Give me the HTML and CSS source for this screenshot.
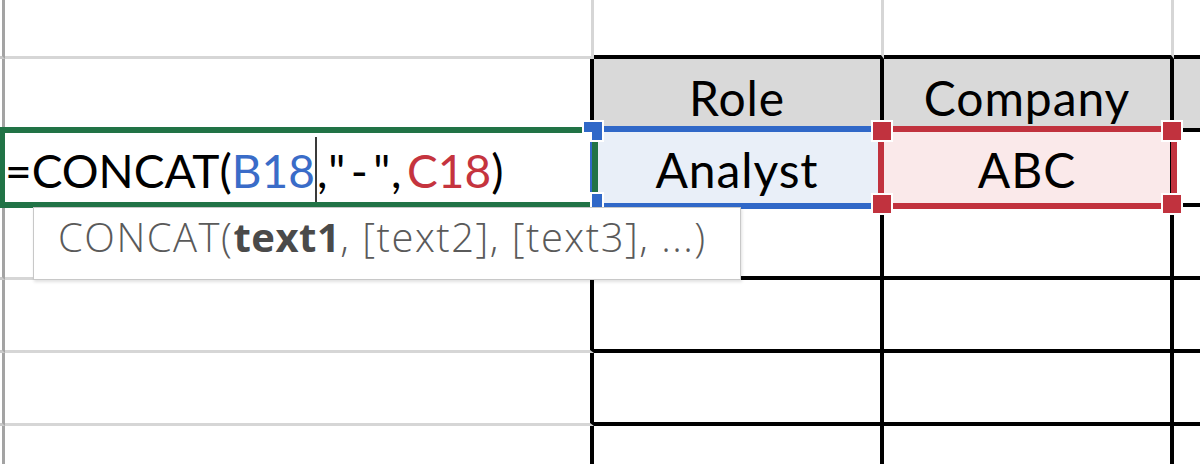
FILE: index.html
```html
<!DOCTYPE html>
<html lang="en">
<head>
<meta charset="utf-8">
<title>CONCAT formula</title>
<link rel="stylesheet" href="styles.css">
</head>
<body>
<div class="sheet">
  <div class="grid">
    <!-- row 1 -->
    <div class="rh"></div>
    <div class="c"></div>
    <div class="c top"></div>
    <div class="c top"></div>
    <div class="c top"></div>
    <!-- row 2 (table header) -->
    <div class="rh"></div>
    <div class="c ta"></div>
    <div class="t head">Role</div>
    <div class="t head">Company</div>
    <div class="t head"></div>
    <!-- row 3 (editing row) -->
    <div class="rh"></div>
    <div class="c ta edit"><span class="formula">=CONCAT(<span class="ref-b">B18</span><span class="caret"></span><span class="punct">,"-",</span><span class="ref-c">C18</span>)</span></div>
    <div class="t val fill-b">Analyst</div>
    <div class="t val fill-c">ABC</div>
    <div class="t"></div>
    <!-- row 4 -->
    <div class="rh"></div>
    <div class="c ta"></div>
    <div class="t"></div>
    <div class="t"></div>
    <div class="t"></div>
    <!-- row 5 -->
    <div class="rh"></div>
    <div class="c ta"></div>
    <div class="t"></div>
    <div class="t"></div>
    <div class="t"></div>
    <!-- row 6 -->
    <div class="rh"></div>
    <div class="c ta"></div>
    <div class="t"></div>
    <div class="t"></div>
    <div class="t"></div>
    <!-- row 7 -->
    <div class="rh"></div>
    <div class="c ta"></div>
    <div class="t"></div>
    <div class="t"></div>
    <div class="t"></div>
  </div>

  <div class="box box-blue"></div>
  <div class="box box-red"></div>
  <div class="box box-green"></div>

  <svg class="handle h-blue-top" width="22" height="22" viewBox="0 0 22 22">
    <path d="M2 2 H20 V20 H10 V12 H2 Z" fill="#3068c8" stroke="#ffffff" stroke-width="4" paint-order="stroke"/>
  </svg>
  <div class="handle h-blue-bottom"></div>
  <div class="handle h-red h-r1"></div>
  <div class="handle h-red h-r2"></div>
  <div class="handle h-red h-r3"></div>
  <div class="handle h-red h-r4"></div>

  <div class="tooltip">CONCAT(<b>text1</b>, [text2], [text3], ...)</div>
</div>
</body>
</html>
```

FILE: styles.css
```css
html, body {
  margin: 0;
  padding: 0;
  background: #ffffff;
}

body {
  width: 1200px;
  height: 464px;
  overflow: hidden;
  font-family: Lato, "Open Sans", sans-serif;
}

.sheet {
  position: relative;
  width: 1200px;
  height: 464px;
  overflow: hidden;
}

.grid {
  display: grid;
  grid-template-columns: 5px 589px 290px 290px 40px;
  grid-template-rows: 59px 73px 75px 73px 73px 73px 60px;
}

.grid > div {
  box-sizing: border-box;
}

.rh {
  border-right: 3px solid #a3a3a3;
  border-bottom: 3px solid #c9c9c9;
}

.c {
  border-right: 3px solid #d6d6d6;
  border-bottom: 3px solid #d6d6d6;
}

.c.top {
  border-bottom: 4px solid #000000;
}

.c.ta {
  border-right: 4px solid #000000;
}

.t {
  border-right: 4px solid #000000;
  border-bottom: 4px solid #000000;
  display: flex;
  align-items: center;
  justify-content: center;
  font-size: 48px;
  letter-spacing: 0.9px;
  color: #000000;
  line-height: 1;
}

.head {
  background: #d9d9d9;
  padding-top: 9px;
}

.val {
  padding-top: 4px;
}

.fill-b {
  background: #e9eff8;
}

.fill-c {
  background: #fae9ea;
}

.edit {
  display: flex;
  align-items: center;
  padding-left: 0;
  padding-top: 3px;
  font-size: 46px;
  line-height: 1;
  color: #000000;
  white-space: nowrap;
}

.ref-b {
  color: #3a6cc8;
}

.ref-c {
  color: #c5343e;
}

.punct {
  letter-spacing: 5.5px;
  padding-left: 2px;
}

.caret {
  display: inline-block;
  width: 2px;
  height: 66px;
  margin-right: -2px;
  background: #3a3a3a;
  vertical-align: -15px;
}

.box {
  position: absolute;
  box-sizing: border-box;
  border: 6px solid;
}

.box-green {
  left: -1px;
  top: 127px;
  width: 599px;
  height: 81px;
  border-color: #217346;
  z-index: 3;
}

.box-blue {
  left: 590px;
  top: 126px;
  width: 294px;
  height: 83px;
  border-color: #3068c8;
  z-index: 1;
}

.box-red {
  left: 878px;
  top: 126px;
  width: 299px;
  height: 83px;
  border-color: #c1323e;
  z-index: 2;
}

.handle {
  position: absolute;
  z-index: 4;
}

.h-blue-top {
  left: 582px;
  top: 120px;
}

.h-blue-bottom {
  left: 590px;
  top: 192px;
  width: 10px;
  height: 18px;
  background: #3068c8;
  border: 2px solid #ffffff;
}

.h-red {
  width: 18px;
  height: 18px;
  background: #c1323e;
  border: 2px solid #ffffff;
}

.h-r1 { left: 871px; top: 120px; }
.h-r2 { left: 871px; top: 193px; }
.h-r3 { left: 1161px; top: 120px; }
.h-r4 { left: 1161px; top: 193px; }

.tooltip {
  position: absolute;
  z-index: 5;
  left: 33px;
  top: 207px;
  width: 708px;
  height: 73px;
  box-sizing: border-box;
  background: #ffffff;
  border: 1px solid #c8c8c8;
  box-shadow: 1px 2px 3px rgba(0, 0, 0, 0.12);
  padding-left: 24px;
  padding-top: 9px;
  font-family: "Open Sans", Lato, sans-serif;
  font-weight: 300;
  font-size: 40px;
  letter-spacing: 1.5px;
  line-height: 1;
  color: #5a5a5a;
  white-space: nowrap;
}

.tooltip b {
  font-weight: 700;
  letter-spacing: 0.5px;
  color: #4a4a4a;
}
```
